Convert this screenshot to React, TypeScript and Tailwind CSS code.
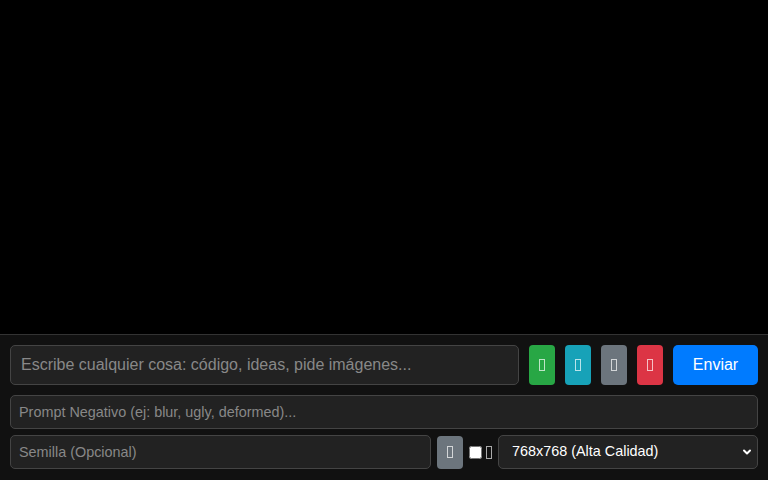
import { ChevronDown } from 'lucide-react';

// Placeholder box for an icon glyph whose font is missing
function Glyph({ className = '' }: { className?: string }) {
  return <span className={`inline-block w-[6px] h-[12px] border border-current ${className}`} />;
}

const tools = [
  { label: 'Código', cls: 'bg-[#28a745]' },
  { label: 'Imagen', cls: 'bg-[#17a2b8]' },
  { label: 'Adjuntar', cls: 'bg-[#6c757d]' },
  { label: 'Limpiar', cls: 'bg-[#dc3545]' },
];

export default function App() {
  return (
    <div className="h-screen flex flex-col bg-black font-['Liberation_Sans',Arial,sans-serif]">
      {/* Chat area */}
      <div className="flex-1" />

      {/* Composer */}
      <div className="border-t border-[#333] bg-[#111] px-[10px] pt-[10px] pb-[11px]">
        <div className="flex gap-[10px] h-10 mb-[10px]">
          <input
            className="flex-1 min-w-0 rounded-[5px] border border-[#444] bg-[#222] px-[10px] text-[16px] text-white placeholder:text-[#888] outline-none"
            placeholder="Escribe cualquier cosa: código, ideas, pide imágenes..."
          />
          {tools.map(t => (
            <button
              key={t.label}
              title={t.label}
              className={`w-[26px] rounded-[4px] flex items-center justify-center text-white/70 ${t.cls}`}
            >
              <Glyph />
            </button>
          ))}
          <button className="w-[85px] rounded-[5px] bg-[#007bff] text-white text-[16px]">Enviar</button>
        </div>

        <input
          className="block w-full h-[34px] mb-[6px] rounded-[5px] border border-[#444] bg-[#222] px-[8px] text-[14.4px] text-white placeholder:text-[#888] outline-none"
          placeholder="Prompt Negativo (ej: blur, ugly, deformed)..."
        />

        <div className="flex items-center gap-[5px] h-[34px]">
          <input
            className="flex-1 min-w-0 h-full rounded-[5px] border border-[#444] bg-[#222] px-[8px] text-[14.4px] text-white placeholder:text-[#888] outline-none"
            placeholder="Semilla (Opcional)"
          />
          <button className="w-[26px] h-[33px] ml-[1px] rounded-[4px] bg-[#6c757d] flex items-center justify-center text-white/70">
            <Glyph />
          </button>
          <label className="flex items-center gap-[4px] text-[#aaa] ml-[1px]">
            <input type="checkbox" className="w-[13px] h-[13px] m-0" />
            <Glyph className="h-[13px]" />
          </label>
          <div className="relative w-[260px] h-full ml-[1px]">
            <select className="appearance-none w-full h-full rounded-[5px] border border-[#444] bg-[#222] pl-[13px] pr-8 text-[14.4px] text-white outline-none">
              <option>768x768 (Alta Calidad)</option>
              <option>512x512 (Rápido)</option>
              <option>1024x1024 (Máxima)</option>
            </select>
            <ChevronDown
              className="absolute right-[5px] top-1/2 -translate-y-1/2 w-[12px] h-[12px] text-white pointer-events-none"
              strokeWidth={4}
            />
          </div>
        </div>
      </div>
    </div>
  );
}
